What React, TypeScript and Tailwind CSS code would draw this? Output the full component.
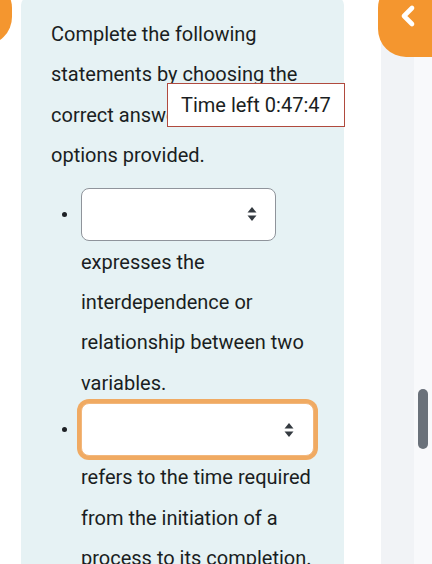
import { ChevronLeft } from "lucide-react";

const SortArrows = () => (
  <svg width="10" height="16" viewBox="0 0 10 16" className="text-[#343a40]">
    <path d="M5 1 L9.5 6.5 H0.5 Z" fill="currentColor" />
    <path d="M5 15 L9.5 9.5 H0.5 Z" fill="currentColor" />
  </svg>
);

const App = () => {
  return (
    <div
      className="relative w-[432px] h-[564px] overflow-hidden bg-white flex text-[#1a1e22]"
      style={{ fontFamily: "Roboto, 'Liberation Sans', sans-serif" }}
    >
      {/* left orange blob */}
      <div className="absolute left-[-60px] top-[-20px] w-[72px] h-[65px] rounded-[28px] bg-[#f4962f]" />

      <div className="w-[21px] shrink-0" />

      {/* question card */}
      <div className="relative w-[323px] shrink-0 -mt-[3px] h-[580px] rounded-[8px] bg-[#e6f2f4] pl-[30px] pr-[18px] pt-[17px] text-[20px] leading-[40.4px]">
        <p className="mb-[12px]">
          Complete the following statements by choosing the correct answer from the options provided.
        </p>

        <ul>
          <li className="flex">
            <div className="w-[30px] shrink-0 h-[53px] flex items-center pl-[11px]">
              <span className="w-[5px] h-[5px] rounded-full bg-[#1d2125]" />
            </div>
            <div className="flex-1">
              <div className="w-[195px] h-[53px] rounded-[8px] border border-[#8f949b] bg-white flex items-center justify-end pr-[18px]">
                <SortArrows />
              </div>
              <p className="mt-[1px]">expresses the interdependence or relationship between two variables.</p>
            </div>
          </li>
          <li className="flex">
            <div className="w-[30px] shrink-0 h-[53px] flex items-center pl-[11px]">
              <span className="w-[5px] h-[5px] rounded-full bg-[#1d2125]" />
            </div>
            <div className="flex-1">
              <div className="w-[233px] h-[53px] rounded-[8px] border border-[#f2b77c] bg-white ring-4 ring-[#f0aa62] flex items-center justify-end pr-[19px]">
                <SortArrows />
              </div>
              <p className="mt-[1px]">refers to the time required from the initiation of a process to its completion.</p>
            </div>
          </li>
        </ul>

        {/* timer */}
        <div className="absolute left-[146px] top-[86px] w-[178px] h-[44px] bg-white border border-[#b04a3e] flex items-center pl-[13px] text-[20px] leading-none">
          Time left 0:47:47
        </div>
      </div>

      <div className="w-[37px] shrink-0" />
      <div className="w-[33px] shrink-0 bg-[#f1f3f6]" />
      <div className="relative flex-1 bg-[#f8f9fb]">
        <div className="absolute left-[4px] top-[389px] w-[10px] h-[60px] rounded-full bg-[#6a717a]" />
      </div>

      {/* right orange back button */}
      <div className="absolute left-[378px] top-[-20px] w-[80px] h-[77px] rounded-[28px] bg-[#f4962f] flex items-start pl-[14px] pt-[20px]">
        <ChevronLeft className="w-[32px] h-[32px] text-white" strokeWidth={3.5} />
      </div>
    </div>
  );
};

export default App;
